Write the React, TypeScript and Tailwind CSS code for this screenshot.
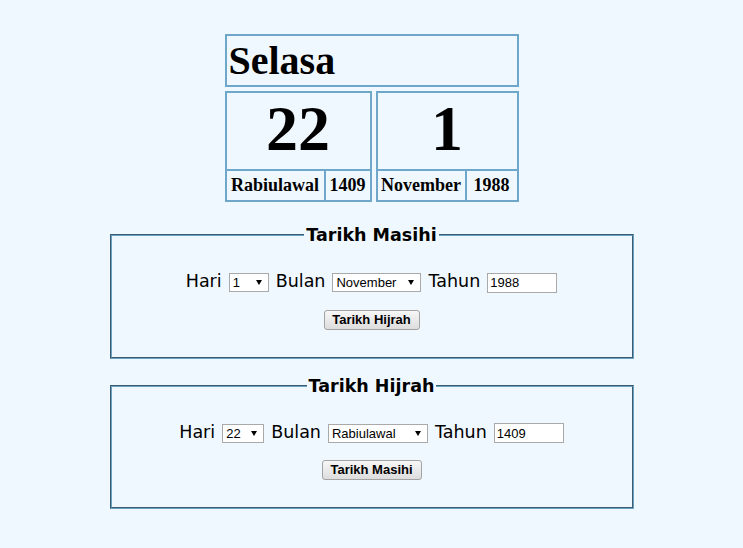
import React from 'react';

const cellBorder = 'border-[#6fa7ca]';

const SelectBox: React.FC<{ value: string; options: string[]; width: string }> = ({ value, options, width }) => (
    <span className="relative inline-flex">
        <select
            defaultValue={value}
            className={`${width} h-[19px] appearance-none rounded-none border border-[#a9a9a9] bg-white pl-[3px] text-[13px] leading-[17px] text-black font-['Liberation_Sans',Arial,sans-serif] outline-none`}
        >
            {options.map(o => (
                <option key={o} value={o}>{o}</option>
            ))}
        </select>
        <svg className="pointer-events-none absolute right-[7px] top-[7px]" width="6" height="5" viewBox="0 0 6 5">
            <path d="M0 0 H6 L3 5 Z" fill="#000" />
        </svg>
    </span>
);

const DateForm: React.FC<{
    title: string;
    day: string;
    days: string[];
    dayWidth: string;
    month: string;
    months: string[];
    monthWidth: string;
    year: string;
    button: string;
    buttonWidth: string;
}> = ({ title, day, days, dayWidth, month, months, monthWidth, year, button, buttonWidth }) => (
    <fieldset className="mx-auto w-[524px] border-2 border-[#6aa2c4] [border-style:groove] px-0 pb-[27px]">
        <legend className="mx-auto px-[2px] text-[17.5px] font-bold text-black">{title}</legend>
        <div className="mt-[20px] flex items-baseline justify-center gap-[7px] text-[17.5px] text-black">
            <span>Hari</span>
            <SelectBox value={day} options={days} width={dayWidth} />
            <span>Bulan</span>
            <SelectBox value={month} options={months} width={monthWidth} />
            <span>Tahun</span>
            <input
                defaultValue={year}
                className="h-[20px] w-[70px] border border-[#a9a9a9] bg-white px-[2px] text-[13px] text-black font-['Liberation_Sans',Arial,sans-serif] outline-none"
            />
        </div>
        <div className="mt-[15px] flex justify-center">
            <button
                className={`${buttonWidth} h-[20px] rounded-[3px] border border-[#a3a3a3] bg-gradient-to-b from-[#f7f7f7] to-[#dddddd] text-[13px] font-bold leading-[18px] text-black font-['Liberation_Sans',Arial,sans-serif]`}
            >
                {button}
            </button>
        </div>
    </fieldset>
);

const hijriMonths = ['Muharram', 'Safar', 'Rabiulawal', 'Rabiulakhir', 'Jamadilawal', 'Jamadilakhir', 'Rejab', 'Syaaban', 'Ramadhan', 'Syawal', 'Zulkaedah', 'Zulhijjah'];
const masihiMonths = ['Januari', 'Februari', 'Mac', 'April', 'Mei', 'Jun', 'Julai', 'Ogos', 'September', 'Oktober', 'November', 'Disember'];
const days31 = Array.from({ length: 31 }, (_, i) => String(i + 1));
const days30 = Array.from({ length: 30 }, (_, i) => String(i + 1));

export default function App() {
    return (
        <div className="min-h-[548px] w-full bg-[#f0f8ff] pt-[34px] font-['DejaVu_Sans',Verdana,sans-serif]">
            {/* Kalendar ringkas */}
            <div className="mx-auto w-[294px] font-['Liberation_Serif','Times_New_Roman',serif] font-bold text-black">
                <div className={`h-[53px] border-2 ${cellBorder} pl-[2px] text-[40px] leading-[49px]`}>Selasa</div>
                <div className="mt-[4px] flex gap-[4px]">
                    <div className={`w-[147px] border-2 ${cellBorder}`}>
                        <div className="h-[76px] pb-[4px] text-center text-[64px] leading-[72px]">22</div>
                        <div className={`flex border-t-2 ${cellBorder} text-[18px] leading-[29px]`}>
                            <div className={`w-[99px] border-r-2 ${cellBorder} text-center`}>Rabiulawal</div>
                            <div className="flex-1 text-center">1409</div>
                        </div>
                    </div>
                    <div className={`w-[143px] border-2 ${cellBorder}`}>
                        <div className="h-[76px] pb-[4px] text-center text-[64px] leading-[72px]">1</div>
                        <div className={`flex border-t-2 ${cellBorder} text-[18px] leading-[29px]`}>
                            <div className={`w-[89px] border-r-2 ${cellBorder} text-center`}>November</div>
                            <div className="flex-1 text-center">1988</div>
                        </div>
                    </div>
                </div>
            </div>

            <div className="mt-[20px]">
                <DateForm
                    title="Tarikh Masihi"
                    day="1"
                    days={days31}
                    dayWidth="w-[40px]"
                    month="November"
                    months={masihiMonths}
                    monthWidth="w-[89px]"
                    year="1988"
                    button="Tarikh Hijrah"
                    buttonWidth="w-[96px]"
                />
            </div>

            <div className="mt-[14px]">
                <DateForm
                    title="Tarikh Hijrah"
                    day="22"
                    days={days30}
                    dayWidth="w-[42px]"
                    month="Rabiulawal"
                    months={hijriMonths}
                    monthWidth="w-[100px]"
                    year="1409"
                    button="Tarikh Masihi"
                    buttonWidth="w-[100px]"
                />
            </div>
        </div>
    );
}
